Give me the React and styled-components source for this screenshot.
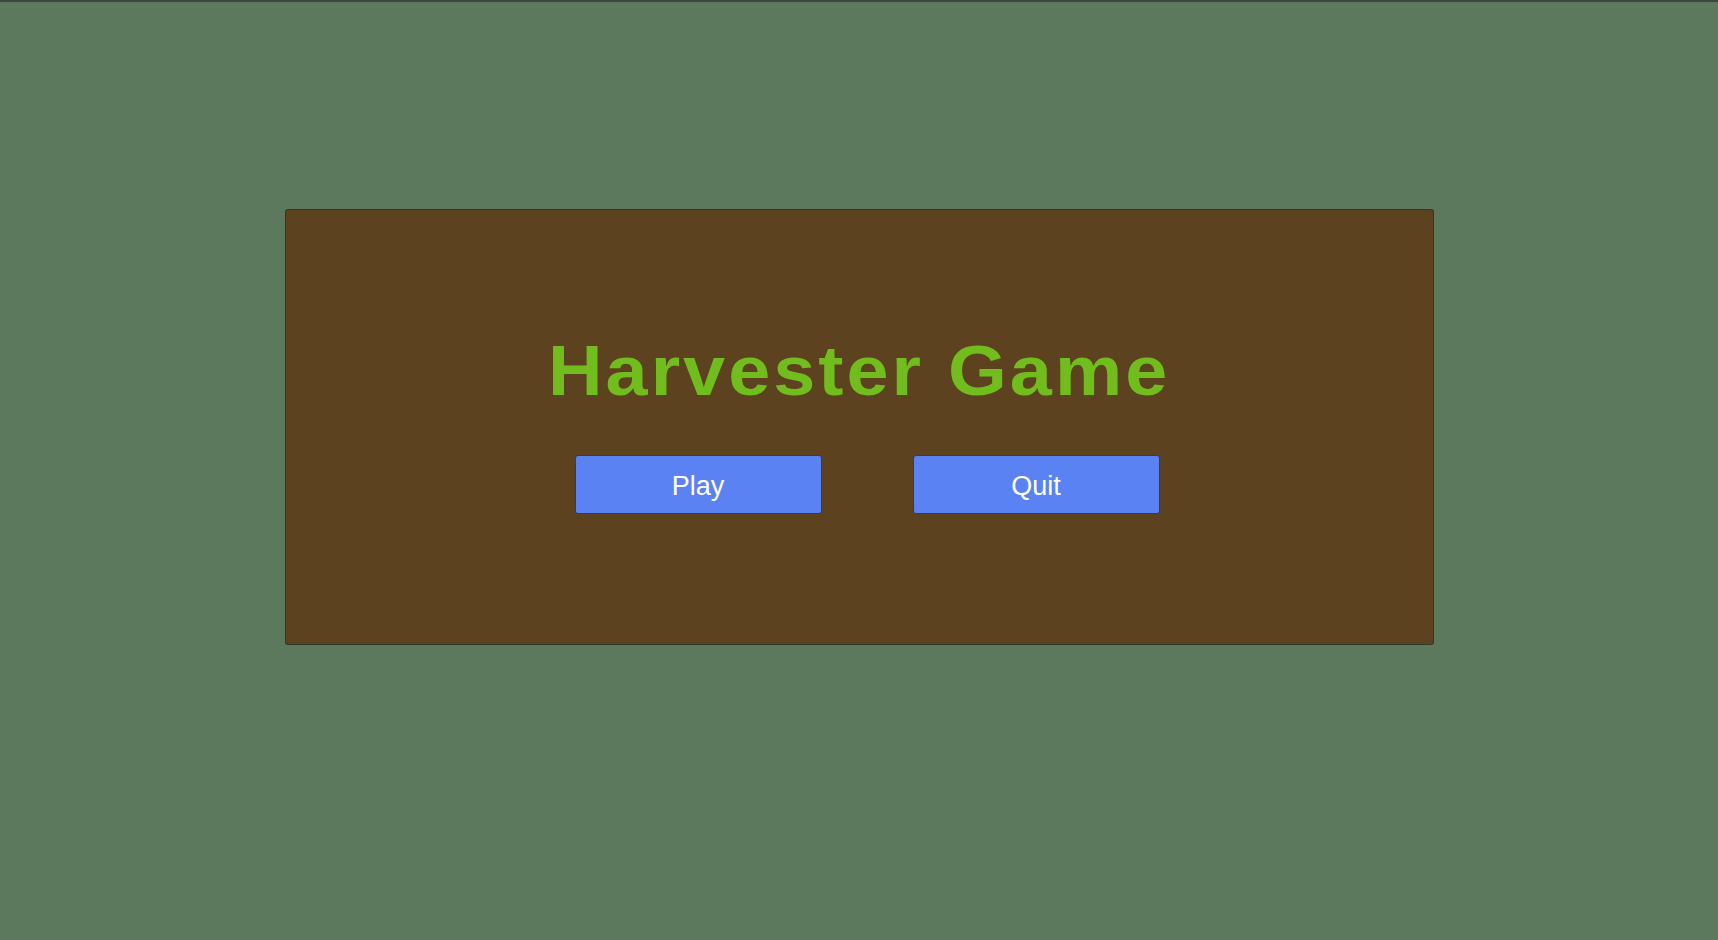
import styled, { createGlobalStyle } from "styled-components";

const GlobalStyle = createGlobalStyle`
  html, body {
    margin: 0;
    padding: 0;
    background: #5c795e;
    font-family: "Liberation Sans", Arial, sans-serif;
  }
`;

const Screen = styled.div`
  width: 1718px;
  height: 940px;
  display: flex;
  flex-direction: column;
  background: #5c795e;
  overflow: hidden;
`;

const TopEdge = styled.div`
  height: 2px;
  background: #3c4a3d;
`;

const Stage = styled.div`
  flex: 1;
  display: flex;
  justify-content: center;
  padding-top: 208px;
`;

const Panel = styled.div`
  box-sizing: border-box;
  width: 1147px;
  height: 434px;
  padding-top: 126px;
  background: #5c421e;
  border-radius: 2px;
  box-shadow: 0 0 0 1px rgba(30, 36, 24, 0.75);
  display: flex;
  flex-direction: column;
  align-items: center;
`;

// the title face is a touch wider than Liberation Sans, so it gets stretched
const Title = styled.h1`
  margin: 0;
  font-family: "Liberation Sans", Arial, sans-serif;
  font-weight: 700;
  font-size: 70px;
  line-height: 70px;
  letter-spacing: 2.8px;
  color: #72bd1e;
  transform: scaleX(1.08);
`;

const ButtonRow = styled.div`
  display: flex;
  gap: 91px;
  margin-top: 49px;
  padding-left: 16px;
`;

const MenuButton = styled.button`
  box-sizing: border-box;
  width: 247px;
  height: 59px;
  background: #5a82f2;
  border: 1px solid #2e3a6a;
  border-radius: 3px;
  color: #ffffff;
  font-family: "Liberation Sans", Arial, sans-serif;
  font-size: 27px;
  line-height: 57px;
  padding: 2px 0 0;
  cursor: pointer;
`;

const App = () => {
  return (
    <>
      <GlobalStyle />
      <Screen>
        <TopEdge />
        <Stage>
          <Panel>
            <Title>Harvester Game</Title>
            <ButtonRow>
              <MenuButton>Play</MenuButton>
              <MenuButton>Quit</MenuButton>
            </ButtonRow>
          </Panel>
        </Stage>
      </Screen>
    </>
  );
};

export default App;
